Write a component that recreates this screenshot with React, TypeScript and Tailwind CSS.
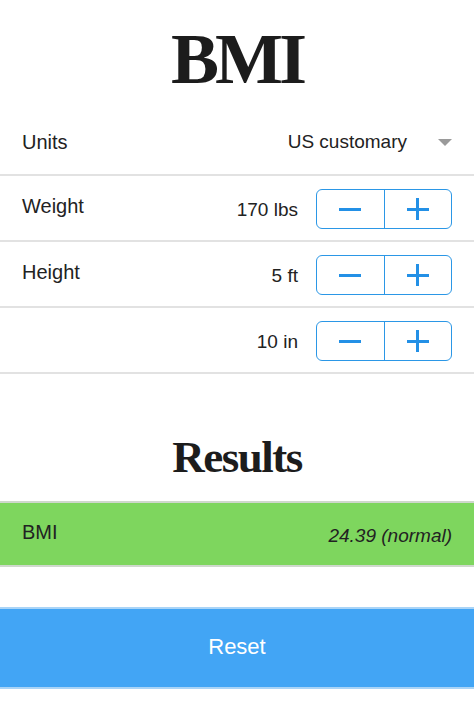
import { useState } from "react";

function Stepper() {
  return (
    <div className="flex h-[40px] w-[136px] overflow-hidden rounded-[6px] border-[1.5px] border-[#2b97e6]">
      <button type="button" className="flex flex-1 items-center justify-center border-r-[1.5px] border-[#2b97e6]">
        <span className="block h-[3px] w-[22px] bg-[#2390e6]" />
      </button>
      <button type="button" className="relative flex flex-1 items-center justify-center">
        <span className="block h-[3px] w-[22px] bg-[#2390e6]" />
        <span className="absolute h-[22px] w-[3px] bg-[#2390e6]" />
      </button>
    </div>
  );
}

function Row({ label, value }: { label?: string; value: string }) {
  return (
    <div className="flex h-[66px] items-center justify-between border-b-2 border-[#e2e2e2] px-[22px] pt-[2px]">
      <span className="mb-[6px] text-[20px]">{label}</span>
      <div className="flex items-center gap-[18px]">
        <span className="mt-[2px] text-[19px]">{value}</span>
        <Stepper />
      </div>
    </div>
  );
}

export default function App() {
  const [units] = useState("US customary");

  return (
    <div className="h-[717px] w-[474px] bg-white font-['Liberation_Sans',Arial,sans-serif] text-[#222]">
      <h1 className="flex h-[110px] items-center justify-center pt-[8px] font-['Liberation_Serif',serif] text-[72px] font-bold tracking-[-4px] text-[#1c1c1c]">
        BMI
      </h1>

      <div className="flex h-[66px] items-center justify-between border-b-2 border-[#e2e2e2] px-[22px]">
        <span className="text-[20px]">Units</span>
        <div className="flex items-center gap-[31px]">
          <span className="text-[19px]">{units}</span>
          <span className="h-0 w-0 border-x-[7px] border-t-[7px] border-x-transparent border-t-[#9a9a9a]" />
        </div>
      </div>

      <Row label="Weight" value="170 lbs" />
      <Row label="Height" value="5 ft" />
      <Row value="10 in" />

      <h2 className="flex h-[127px] items-end justify-center pb-[10px] font-['Liberation_Serif',serif] text-[45px] font-bold tracking-[-1.5px] text-[#1c1c1c]">
        Results
      </h2>

      <div className="flex h-[66px] items-center justify-between border-y-2 border-[#cfd8cc] bg-[#7ed65e] px-[22px]">
        <span className="mb-[4px] text-[20px]">BMI</span>
        <span className="mt-[4px] text-[19px] italic">24.39 (normal)</span>
      </div>

      <button
        type="button"
        className="mt-[40px] flex h-[82px] w-full items-center justify-center border-y-2 border-[#a9d4f7] bg-[#42a5f5] pb-[4px] text-[22px] text-white"
      >
        Reset
      </button>
    </div>
  );
}
